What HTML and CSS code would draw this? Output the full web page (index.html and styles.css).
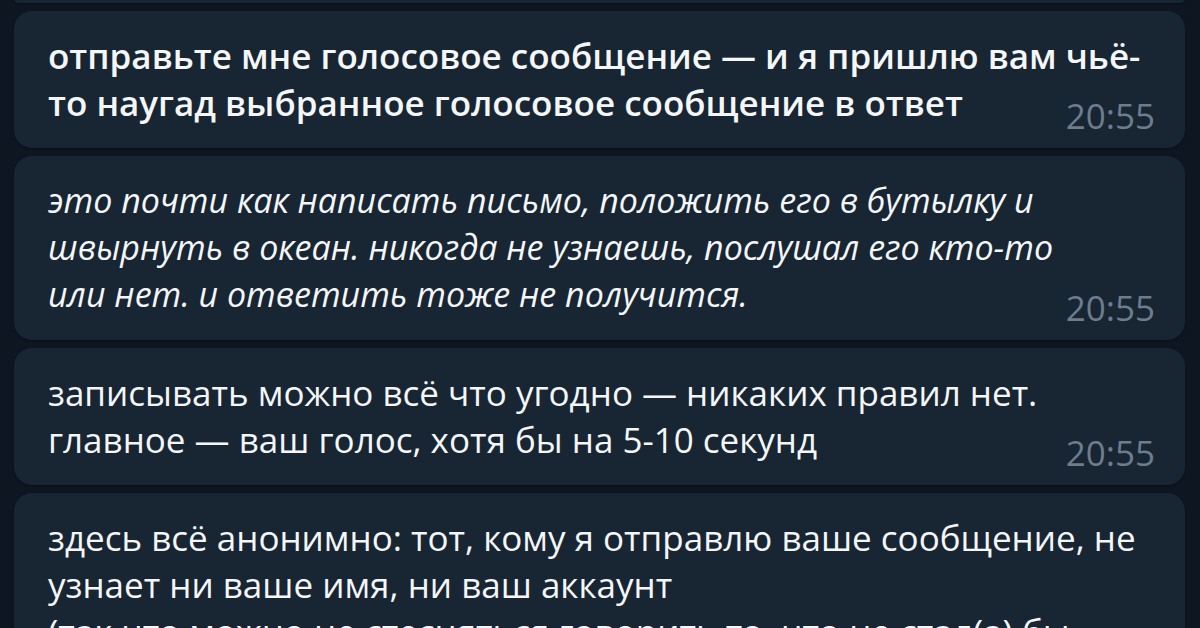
FILE: index.html
```html
<!DOCTYPE html>
<html lang="ru">
<head>
<meta charset="utf-8">
<link rel="stylesheet" href="styles.css">
</head>
<body>
<div class="chat">
  <div class="bubble prev"></div>
  <div class="bubble">
    <p class="text bold">отправьте мне голосовое сообщение — и я пришлю вам чьё-<br>то наугад выбранное голосовое сообщение в ответ</p>
    <span class="time">20:55</span>
  </div>
  <div class="bubble">
    <p class="text italic">это почти как написать письмо, положить его в бутылку и<br>швырнуть в океан. никогда не узнаешь, послушал его кто-то<br>или нет. и ответить тоже не получится.</p>
    <span class="time">20:55</span>
  </div>
  <div class="bubble">
    <p class="text">записывать можно всё что угодно — никаких правил нет.<br>главное — ваш голос, хотя бы на 5-10 секунд</p>
    <span class="time">20:55</span>
  </div>
  <div class="bubble">
    <p class="text">здесь всё анонимно: тот, кому я отправлю ваше сообщение, не<br>узнает ни ваше имя, ни ваш аккаунт<br>(так что можно не стесняться говорить то, что не стал(а) бы<br>говорить от своего имени)</p>
    <span class="time">20:55</span>
  </div>
</div>
</body>
</html>
```

FILE: styles.css
```css
html, body {
  margin: 0;
  padding: 0;
  background: #0e1621;
  overflow: hidden;
  height: 628px;
}
.chat {
  display: flex;
  flex-direction: column;
  gap: 8px;
  padding: 0 15px 0 14px;
  margin-top: -6px;
  font-family: "Open Sans", "Noto Sans", sans-serif;
}
.bubble {
  background: #182533;
  border-radius: 18px;
  padding: 21px 30px 15px 34px;
  display: flex;
  flex-direction: column;
  box-shadow: 0 1px 2px rgba(0,0,0,0.35);
}
.bubble.prev {
  height: 9px;
  padding: 0;
}
.text {
  margin: 0;
  color: #f4f6f8;
  font-size: 35px;
  line-height: 47px;
  white-space: nowrap;
}
.bold { font-weight: 600; }
.italic { font-style: italic; font-size: 34px; }
.time {
  align-self: flex-end;
  margin-top: -27px;
  color: #6c7d8d;
  font-size: 35px;
  line-height: 34px;
}
```
